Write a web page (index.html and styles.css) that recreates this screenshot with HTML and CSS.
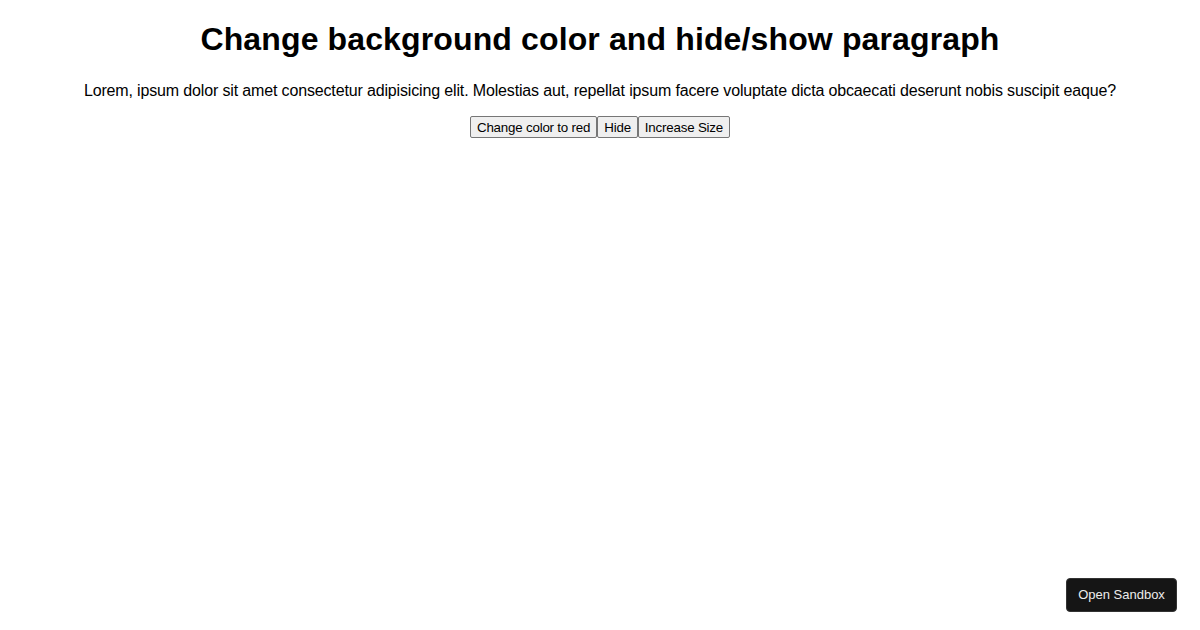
FILE: index.html
```html
<!DOCTYPE html>
<html>
<head>
<meta charset="utf-8">
<link rel="stylesheet" href="styles.css">
</head>
<body>
<div class="page">
  <h1 class="title">Change background color and hide/show paragraph</h1>
  <p class="text">Lorem, ipsum dolor sit amet consectetur adipisicing elit. Molestias aut, repellat ipsum facere voluptate dicta obcaecati deserunt nobis suscipit eaque?</p>
  <div class="controls"><button class="btn">Change color to red</button><button class="btn">Hide</button><button class="btn">Increase Size</button></div>
</div>
<button class="sandbox">Open Sandbox</button>
</body>
</html>
```
FILE: styles.css
```css
html, body { margin: 0; padding: 0; background: #fff; }
body { font-family: "Liberation Sans", Arial, sans-serif; color: #000; }
.page { text-align: center; padding: 0 8px; }
.title { font-size: 32px; font-weight: bold; margin: 21px 0 0; line-height: 37px; letter-spacing: 0.13px; }
.text { font-size: 16px; margin: 24px 0 16px; line-height: 18px; letter-spacing: -0.15px; }
.controls { display: flex; justify-content: center; }
.btn { font-family: "Liberation Sans", Arial, sans-serif; font-size: 13.33px; letter-spacing: -0.2px; height: 22px; padding: 1px 6px; border: 1px solid #767676; border-radius: 2px; background: #efefef; color: #000; margin: 0; }
.sandbox { position: fixed; right: 23px; bottom: 18px; width: 111px; height: 34px; background: #151515; color: #ececec; border: 1px solid #333; border-radius: 4px; font-family: "Liberation Sans", Arial, sans-serif; font-size: 13px; padding: 0 0 2px; }
```
